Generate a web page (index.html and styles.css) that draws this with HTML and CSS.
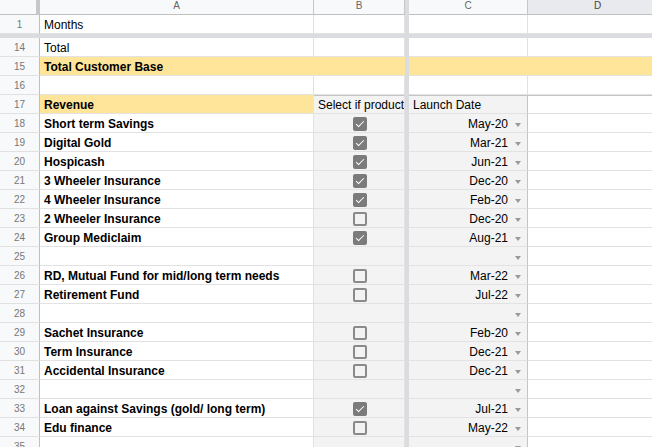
FILE: index.html
```html
<!DOCTYPE html>
<html>
<head>
<meta charset="utf-8">
<link rel="stylesheet" href="styles.css">
</head>
<body>
<div class="sheet">
  <div class="row head">
    <div class="rh corner"></div>
    <div class="ch">A</div>
    <div class="ch">B</div>
    <div class="fz"></div>
    <div class="ch">C</div>
    <div class="ch sel">D</div>
  </div>
  <div class="row">
    <div class="rh">1</div>
    <div class="c">Months</div>
    <div class="c"></div>
    <div class="fz"></div>
    <div class="c"></div>
    <div class="c"></div>
  </div>
  <div class="hbar"></div>
  <div class="row">
    <div class="rh">14</div>
    <div class="c">Total</div>
    <div class="c"></div>
    <div class="fz"></div>
    <div class="c"></div>
    <div class="c"></div>
  </div>
  <div class="row">
    <div class="rh">15</div>
    <div class="c y b">Total Customer Base</div>
    <div class="c y"></div>
    <div class="fz"></div>
    <div class="c y"></div>
    <div class="c y"></div>
  </div>
  <div class="row">
    <div class="rh">16</div>
    <div class="c"></div>
    <div class="c"></div>
    <div class="fz"></div>
    <div class="c"></div>
    <div class="c"></div>
  </div>
  <div class="row">
    <div class="rh">17</div>
    <div class="c y b">Revenue</div>
    <div class="c g top">Select if product</div>
    <div class="fz"></div>
    <div class="c g top cr">Launch Date</div>
    <div class="c top"></div>
  </div>
  <div class="row"><div class="rh">18</div><div class="c b">Short term Savings</div><div class="c g cb"><span class="box on"></span></div><div class="fz"></div><div class="c g cr dt"><span>May-20</span><i class="dd"></i></div><div class="c"></div></div>
  <div class="row"><div class="rh">19</div><div class="c b">Digital Gold</div><div class="c g cb"><span class="box on"></span></div><div class="fz"></div><div class="c g cr dt"><span>Mar-21</span><i class="dd"></i></div><div class="c"></div></div>
  <div class="row"><div class="rh">20</div><div class="c b">Hospicash</div><div class="c g cb"><span class="box on"></span></div><div class="fz"></div><div class="c g cr dt"><span>Jun-21</span><i class="dd"></i></div><div class="c"></div></div>
  <div class="row"><div class="rh">21</div><div class="c b">3 Wheeler Insurance</div><div class="c g cb"><span class="box on"></span></div><div class="fz"></div><div class="c g cr dt"><span>Dec-20</span><i class="dd"></i></div><div class="c"></div></div>
  <div class="row"><div class="rh">22</div><div class="c b">4 Wheeler Insurance</div><div class="c g cb"><span class="box on"></span></div><div class="fz"></div><div class="c g cr dt"><span>Feb-20</span><i class="dd"></i></div><div class="c"></div></div>
  <div class="row"><div class="rh">23</div><div class="c b">2 Wheeler Insurance</div><div class="c g cb"><span class="box"></span></div><div class="fz"></div><div class="c g cr dt"><span>Dec-20</span><i class="dd"></i></div><div class="c"></div></div>
  <div class="row"><div class="rh">24</div><div class="c b">Group Mediclaim</div><div class="c g cb"><span class="box on"></span></div><div class="fz"></div><div class="c g cr dt"><span>Aug-21</span><i class="dd"></i></div><div class="c"></div></div>
  <div class="row"><div class="rh">25</div><div class="c b"></div><div class="c g cb"></div><div class="fz"></div><div class="c g cr dt"><span></span><i class="dd"></i></div><div class="c"></div></div>
  <div class="row"><div class="rh">26</div><div class="c b">RD, Mutual Fund for mid/long term needs</div><div class="c g cb"><span class="box"></span></div><div class="fz"></div><div class="c g cr dt"><span>Mar-22</span><i class="dd"></i></div><div class="c"></div></div>
  <div class="row"><div class="rh">27</div><div class="c b">Retirement Fund</div><div class="c g cb"><span class="box"></span></div><div class="fz"></div><div class="c g cr dt"><span>Jul-22</span><i class="dd"></i></div><div class="c"></div></div>
  <div class="row"><div class="rh">28</div><div class="c b"></div><div class="c g cb"></div><div class="fz"></div><div class="c g cr dt"><span></span><i class="dd"></i></div><div class="c"></div></div>
  <div class="row"><div class="rh">29</div><div class="c b">Sachet Insurance</div><div class="c g cb"><span class="box"></span></div><div class="fz"></div><div class="c g cr dt"><span>Feb-20</span><i class="dd"></i></div><div class="c"></div></div>
  <div class="row"><div class="rh">30</div><div class="c b">Term Insurance</div><div class="c g cb"><span class="box"></span></div><div class="fz"></div><div class="c g cr dt"><span>Dec-21</span><i class="dd"></i></div><div class="c"></div></div>
  <div class="row"><div class="rh">31</div><div class="c b">Accidental Insurance</div><div class="c g cb"><span class="box"></span></div><div class="fz"></div><div class="c g cr dt"><span>Dec-21</span><i class="dd"></i></div><div class="c"></div></div>
  <div class="row"><div class="rh">32</div><div class="c b"></div><div class="c g cb"></div><div class="fz"></div><div class="c g cr dt"><span></span><i class="dd"></i></div><div class="c"></div></div>
  <div class="row"><div class="rh">33</div><div class="c b">Loan against Savings (gold/ long term)</div><div class="c g cb"><span class="box on"></span></div><div class="fz"></div><div class="c g cr dt"><span>Jul-21</span><i class="dd"></i></div><div class="c"></div></div>
  <div class="row"><div class="rh">34</div><div class="c b">Edu finance</div><div class="c g cb"><span class="box"></span></div><div class="fz"></div><div class="c g cr dt"><span>May-22</span><i class="dd"></i></div><div class="c"></div></div>
  <div class="row"><div class="rh">35</div><div class="c b"></div><div class="c g cb"></div><div class="fz"></div><div class="c g cr dt"><span></span><i class="dd"></i></div><div class="c"></div></div>
</div>
</body>
</html>
```

FILE: styles.css
```css
html, body {
  margin: 0;
  padding: 0;
  background: #ffffff;
  overflow: hidden;
}
.sheet {
  width: 652px;
  display: flex;
  flex-direction: column;
  font-family: "Liberation Sans", Arial, sans-serif;
  font-size: 12px;
  color: #000;
}
.row {
  display: grid;
  grid-template-columns: 40px 274px 91px 4px 119px 140px;
  height: 19px;
  flex: none;
}
.row > div {
  box-sizing: border-box;
  overflow: hidden;
  white-space: nowrap;
}
.head {
  height: 15px;
}
.ch {
  background: #f8f9fa;
  border-right: 1px solid #c7c7c7;
  border-bottom: 1px solid #c0c0c0;
  color: #666;
  font-size: 10px;
  line-height: 11px;
  text-align: center;
}
.ch.sel {
  background: #e8eaed;
  color: #444;
}
.rh {
  background: #f8f9fa;
  border-right: 1px solid #c0c0c0;
  border-bottom: 1px solid #e1e1e1;
  color: #777;
  font-size: 10px;
  line-height: 19px;
  text-align: center;
}
.rh.corner {
  border-bottom: 1px solid #c0c0c0;
  border-right: 4px solid #c7c7c7;
}
.fz {
  background: #dadce0;
}
.hbar {
  height: 4px;
  background: #dadce0;
  flex: none;
}
.c {
  border-right: 1px solid #e2e2e2;
  border-bottom: 1px solid #e2e2e2;
  line-height: 17px;
  padding: 2px 3px 0 4px;
}
.c.y {
  background: #ffe599;
  border-right-color: #ffe599;
}
.c.g {
  background: #f3f3f3;
}
.c.b {
  font-weight: bold;
}
.c.top {
  border-top: 1px solid #c4c4c4;
  line-height: 17px;
  padding-top: 1px;
}
.c.cr {
  border-right-color: #c4c4c4;
}
.cb {
  display: flex;
  align-items: center;
  justify-content: center;
  padding: 1px 0 0 1px;
}
.box {
  width: 10px;
  height: 10px;
  border: 2px solid #8a8a8a;
  border-radius: 2px;
  display: block;
  position: relative;
}
.box.on {
  background: #7b7b7b;
  border-color: #7b7b7b;
}
.box.on::after {
  content: "";
  position: absolute;
  left: 3px;
  top: 0px;
  width: 3px;
  height: 7px;
  border-right: 1.5px solid #fff;
  border-bottom: 1.5px solid #fff;
  transform: rotate(45deg);
}
.dt {
  display: flex;
  justify-content: flex-end;
  align-items: center;
  gap: 7px;
  padding-right: 6px;
}
.dd {
  width: 0;
  height: 0;
  border-left: 3.5px solid transparent;
  border-right: 3.5px solid transparent;
  border-top: 4px solid #9a9a9a;
  margin-top: 1px;
}
```
